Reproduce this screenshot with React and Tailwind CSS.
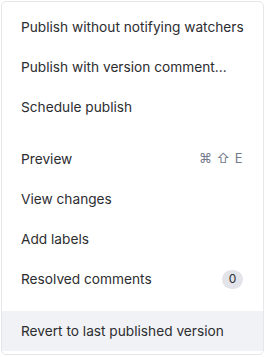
import React from 'react';

const groups = [
  [
    { label: 'Publish without notifying watchers' },
    { label: 'Publish with version comment...' },
    { label: 'Schedule publish' },
  ],
  [
    { label: 'Preview', shortcut: '⌘ ⇧ E' },
    { label: 'View changes' },
    { label: 'Add labels' },
    { label: 'Resolved comments', badge: '0' },
  ],
  [{ label: 'Revert to last published version', active: true }],
];

function MenuItem({ item }) {
  return (
    <div
      className={`h-10 flex items-center justify-between pl-[19px] pr-[20px] text-[13.7px] text-[#2c2d30] whitespace-nowrap ${
        item.active ? 'bg-[#f1f2f5]' : ''
      }`}
    >
      <span>{item.label}</span>
      {item.shortcut && <span className="text-[13px] text-[#737a8c] tracking-[0.5px]">{item.shortcut}</span>}
      {item.badge && (
        <span className="h-[19px] min-w-[21px] px-1.5 rounded-full bg-[#e2e4e9] text-[12px] text-[#2c2d30] flex items-center justify-center">
          {item.badge}
        </span>
      )}
    </div>
  );
}

export default function App() {
  return (
    <div className="w-[265px] h-[357px] bg-white p-px font-['Inter',sans-serif]">
      <div className="w-[263px] border border-[#e6e7ea] rounded-[5px] pt-[5px] pb-[3px] bg-white overflow-hidden">
        {groups.map((group, gi) => (
          <div key={gi}>
            {gi > 0 && <div className="h-3" />}
            {group.map(item => (
              <MenuItem key={item.label} item={item} />
            ))}
          </div>
        ))}
      </div>
    </div>
  );
}
